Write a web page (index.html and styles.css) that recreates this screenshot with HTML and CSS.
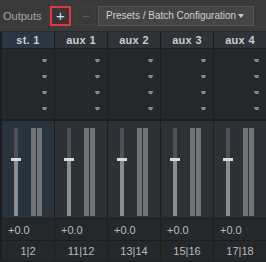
FILE: index.html
```html
<!DOCTYPE html>
<html>
<head>
<meta charset="utf-8">
<link rel="stylesheet" href="styles.css">
</head>
<body>
<div class="app">
  <div class="toolbar">
    <span class="label">Outputs</span>
    <button class="btn btn-add">+</button>
    <button class="btn btn-remove">&minus;</button>
    <div class="dropdown">
      <span class="dd-text">Presets / Batch Configuration</span>
      <span class="dd-arrow"></span>
    </div>
  </div>
  <div class="mixer">
    <div class="channel selected">
      <div class="ch-head">st. 1</div>
      <div class="sends"><span class="caret"></span><span class="caret"></span><span class="caret"></span><span class="caret"></span></div>
      <div class="fader-area">
        <div class="fader"><div class="track-top"></div><div class="track-bottom"></div><div class="handle"></div></div>
        <div class="meters"><div class="meter"></div><div class="meter"></div></div>
      </div>
      <div class="gain">+0.0</div>
      <div class="io">1|2</div>
    </div>
    <div class="channel">
      <div class="ch-head">aux 1</div>
      <div class="sends"><span class="caret"></span><span class="caret"></span><span class="caret"></span><span class="caret"></span></div>
      <div class="fader-area">
        <div class="fader"><div class="track-top"></div><div class="track-bottom"></div><div class="handle"></div></div>
        <div class="meters"><div class="meter"></div><div class="meter"></div></div>
      </div>
      <div class="gain">+0.0</div>
      <div class="io">11|12</div>
    </div>
    <div class="channel">
      <div class="ch-head">aux 2</div>
      <div class="sends"><span class="caret"></span><span class="caret"></span><span class="caret"></span><span class="caret"></span></div>
      <div class="fader-area">
        <div class="fader"><div class="track-top"></div><div class="track-bottom"></div><div class="handle"></div></div>
        <div class="meters"><div class="meter"></div><div class="meter"></div></div>
      </div>
      <div class="gain">+0.0</div>
      <div class="io">13|14</div>
    </div>
    <div class="channel">
      <div class="ch-head">aux 3</div>
      <div class="sends"><span class="caret"></span><span class="caret"></span><span class="caret"></span><span class="caret"></span></div>
      <div class="fader-area">
        <div class="fader"><div class="track-top"></div><div class="track-bottom"></div><div class="handle"></div></div>
        <div class="meters"><div class="meter"></div><div class="meter"></div></div>
      </div>
      <div class="gain">+0.0</div>
      <div class="io">15|16</div>
    </div>
    <div class="channel">
      <div class="ch-head">aux 4</div>
      <div class="sends"><span class="caret"></span><span class="caret"></span><span class="caret"></span><span class="caret"></span></div>
      <div class="fader-area">
        <div class="fader"><div class="track-top"></div><div class="track-bottom"></div><div class="handle"></div></div>
        <div class="meters"><div class="meter"></div><div class="meter"></div></div>
      </div>
      <div class="gain">+0.0</div>
      <div class="io">17|18</div>
    </div>
  </div>
</div>
</body>
</html>
```

FILE: styles.css
```css
* { box-sizing: border-box; }
html, body { margin: 0; padding: 0; background: #1d1f21; }
.app {
  width: 266px;
  height: 262px;
  overflow: hidden;
  font-family: "Liberation Sans", Arial, sans-serif;
  background: #1d1f21;
}
.toolbar {
  height: 32px;
  background: #3a3a3a;
  display: flex;
  align-items: center;
  padding-left: 3px;
  border-bottom: 1px solid #2a2a2a;
}
.label {
  color: #a3a3a3;
  font-size: 11px;
  width: 47px;
}
.btn {
  font-family: "Liberation Sans", Arial, sans-serif;
  padding: 0;
  margin: 0;
  display: flex;
  align-items: center;
  justify-content: center;
}
.btn-add {
  width: 21px;
  height: 20px;
  border: 2px solid #e8343a;
  background: #363636;
  color: #dcdcdc;
  font-size: 15px;
  line-height: 1;
}
.btn-remove {
  width: 19px;
  height: 19px;
  margin-left: 5px;
  border: 1px solid #3f3f3f;
  background: #3a3a3a;
  color: #5c5c5c;
  font-size: 14px;
}
.dropdown {
  margin-left: 3px;
  width: 156px;
  height: 20px;
  background: #454545;
  border: 1px solid #555555;
  display: flex;
  align-items: center;
  padding-left: 7px;
  padding-right: 9px;
  justify-content: space-between;
}
.dd-text {
  color: #cfcfcf;
  font-size: 10px;
  white-space: nowrap;
}
.dd-arrow {
  width: 0;
  height: 0;
  border-left: 3.5px solid transparent;
  border-right: 3.5px solid transparent;
  border-top: 4px solid #c8c8c8;
}
.mixer {
  display: flex;
  gap: 1px;
  padding-left: 2px;
  background: #1c1e20;
  height: 229px;
}
.channel {
  flex: 0 0 52px;
  display: flex;
  flex-direction: column;
}
.ch-head {
  height: 16px;
  background: #2f3337;
  color: #c9cdd1;
  font-weight: bold;
  font-size: 11px;
  display: flex;
  align-items: center;
  justify-content: center;
  letter-spacing: 0.3px;
}
.selected .ch-head { background: #2a3743; }
.sends {
  margin-top: 1px;
  height: 71px;
  background: #25282b;
  display: flex;
  flex-direction: column;
  align-items: flex-end;
  padding-top: 10px;
  padding-right: 7px;
  gap: 13px;
}
.caret {
  display: block;
  width: 5px;
  height: 3px;
  border-left: 1px solid transparent;
  border-right: 1px solid transparent;
  border-top: 3px solid #85888b;
}
.fader-area {
  margin-top: 2px;
  height: 98px;
  background: #2d3034;
  display: flex;
  padding: 7px 0 2px 9px;
}
.selected .fader-area { background: #28333b; }
.fader {
  position: relative;
  width: 10px;
  display: flex;
  flex-direction: column;
  align-items: center;
}
.track-top {
  width: 4px;
  height: 30px;
  background: #4d5155;
}
.track-bottom {
  width: 4px;
  flex: 1;
  background: #8a8e91;
}
.handle {
  position: absolute;
  left: 0;
  top: 30px;
  width: 10px;
  height: 3px;
  background: #d9dadb;
}
.meters {
  margin-left: 10px;
  display: flex;
  gap: 1px;
}
.meter {
  width: 5px;
  background: #707477;
}
.gain {
  margin-top: 1px;
  height: 21px;
  background: #25282b;
  color: #b9bcbf;
  font-size: 11px;
  display: flex;
  align-items: center;
  padding-left: 6px;
}
.io {
  margin-top: 1px;
  height: 20px;
  background: #25282b;
  color: #b9bcbf;
  font-size: 11px;
  display: flex;
  align-items: center;
  justify-content: center;
}
```
